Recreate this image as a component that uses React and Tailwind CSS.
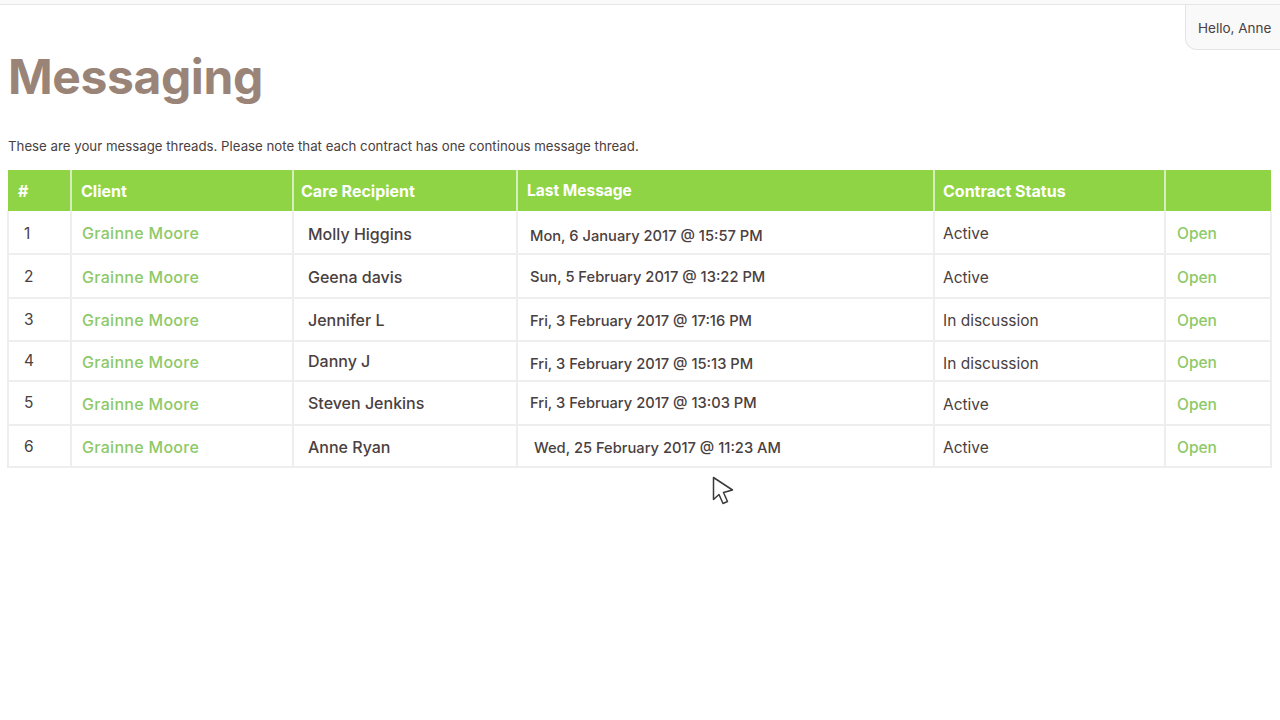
const rows = [
  { n: 1, care: "Molly Higgins", careTop: "pt-[3px]", last: "Mon, 6 January 2017 @ 15:57 PM", lastTop: "pt-[9px]", status: "Active", statusTop: "pt-[4px]", h: "h-[43px]" },
  { n: 2, care: "Geena davis", careTop: "pt-[1px]", last: "Sun, 5 February 2017 @ 13:22 PM", lastTop: "pt-[3px]", status: "Active", statusTop: "pt-[3px]", h: "h-[44px]" },
  { n: 3, care: "Jennifer L", careTop: "pt-[1px]", last: "Fri, 3 February 2017 @ 17:16 PM", lastTop: "pt-[3px]", status: "In discussion", statusTop: "pt-[3px]", h: "h-[43px]" },
  { n: 4, care: "Danny J", careTop: "pt-0", last: "Fri, 3 February 2017 @ 15:13 PM", lastTop: "pt-[6px]", status: "In discussion", statusTop: "pt-[5px]", h: "h-[40px]" },
  { n: 5, care: "Steven Jenkins", careTop: "pb-[1px]", last: "Fri, 3 February 2017 @ 13:03 PM", lastTop: "pt-[1px]", status: "Active", statusTop: "pt-[3px]", h: "h-[44px]" },
  { n: 6, care: "Anne Ryan", careTop: "pt-[1px]", last: "Wed, 25 February 2017 @ 11:23 AM", lastTop: "pt-[5px]", status: "Active", statusTop: "pt-[3px]", h: "h-[42px]" },
]

const Cursor = () => (
  <svg className="absolute left-[712px] top-[476px]" width="24" height="30" viewBox="0 0 24 30" fill="#fff" stroke="#3a3a3a" strokeWidth="1.5" strokeLinejoin="round">
    <path d="M1.5 1.5 L1.5 23.5 L7 18.5 L11 27.5 L15.5 25.5 L11.5 16.5 L20.5 14 Z" />
  </svg>
)

const App = () => {
  return (
    <div className="relative h-[720px] w-[1280px] overflow-hidden bg-white font-['Inter',sans-serif] text-[#4a4040]">
      <div className="h-[5px] border-b border-[#e6e6e6] bg-[#fafafa]" />
      <div className="flex justify-end">
        <div className="flex h-[45px] w-[95px] items-center rounded-bl-xl border-b border-l border-[#e4e4e4] bg-[#f9f9f9] pt-0.5 pl-3 text-[13.5px] whitespace-nowrap">
          Hello, Anne
        </div>
      </div>
      <div className="px-2">
        <h1 className="mt-[-1px] text-[48px] leading-[56px] font-bold tracking-[-0.4px] text-[#9a8478]">Messaging</h1>
        <p className="mt-[33px] text-[13.25px] leading-4">
          These are your message threads. Please note that each contract has one continous message thread.
        </p>
        <table className="mt-4 -ml-px w-[1263px] table-fixed border-collapse text-[15.5px]">
          <colgroup>
            <col className="w-[63px]" />
            <col className="w-[222px]" />
            <col className="w-[224px]" />
            <col className="w-[417px]" />
            <col className="w-[231px]" />
            <col className="w-[106px]" />
          </colgroup>
          <thead>
            <tr className="h-[41px] bg-[#8fd444] text-left text-[16px] font-bold text-white">
              <th className="border-r-2 border-[#d5eebb] pl-[10px] font-bold">#</th>
              <th className="border-r-2 border-[#d5eebb] pl-[9px] font-bold">Client</th>
              <th className="border-r-2 border-[#d5eebb] pl-[7px] font-bold">Care Recipient</th>
              <th className="border-r-2 border-[#d5eebb] pt-[1px] pl-[9px] text-[15.5px] font-bold">Last Message</th>
              <th className="border-r-2 border-[#d5eebb] pl-2 font-bold">Contract Status</th>
              <th />
            </tr>
          </thead>
          <tbody>
            {rows.map((row) => (
              <tr key={row.n} className={`${row.h} border-b-2 border-[#eeeeee]`}>
                <td className={`border-x-2 border-[#eeeeee] pl-[15px] ${row.careTop}`}>{row.n}</td>
                <td className="border-r-2 border-[#eeeeee] pt-[1px] pl-[10px] text-[16px] font-medium tracking-[0.3px] text-[#8dc968]">Grainne Moore</td>
                <td className={`border-r-2 border-[#eeeeee] pl-[14px] text-[16px] font-medium ${row.careTop}`}>{row.care}</td>
                <td className={`border-r-2 border-[#eeeeee] text-[14.7px] font-medium ${row.lastTop} ${row.n === 6 ? "pl-4" : "pl-3"}`}>{row.last}</td>
                <td className={`border-r-2 border-[#eeeeee] pl-2 ${row.statusTop}`}>{row.status}</td>
                <td className="border-r-2 border-[#eeeeee] pt-[3px] pl-[11px] font-medium text-[#8dc968]">Open</td>
              </tr>
            ))}
          </tbody>
        </table>
      </div>
      <Cursor />
    </div>
  )
}

export default App
